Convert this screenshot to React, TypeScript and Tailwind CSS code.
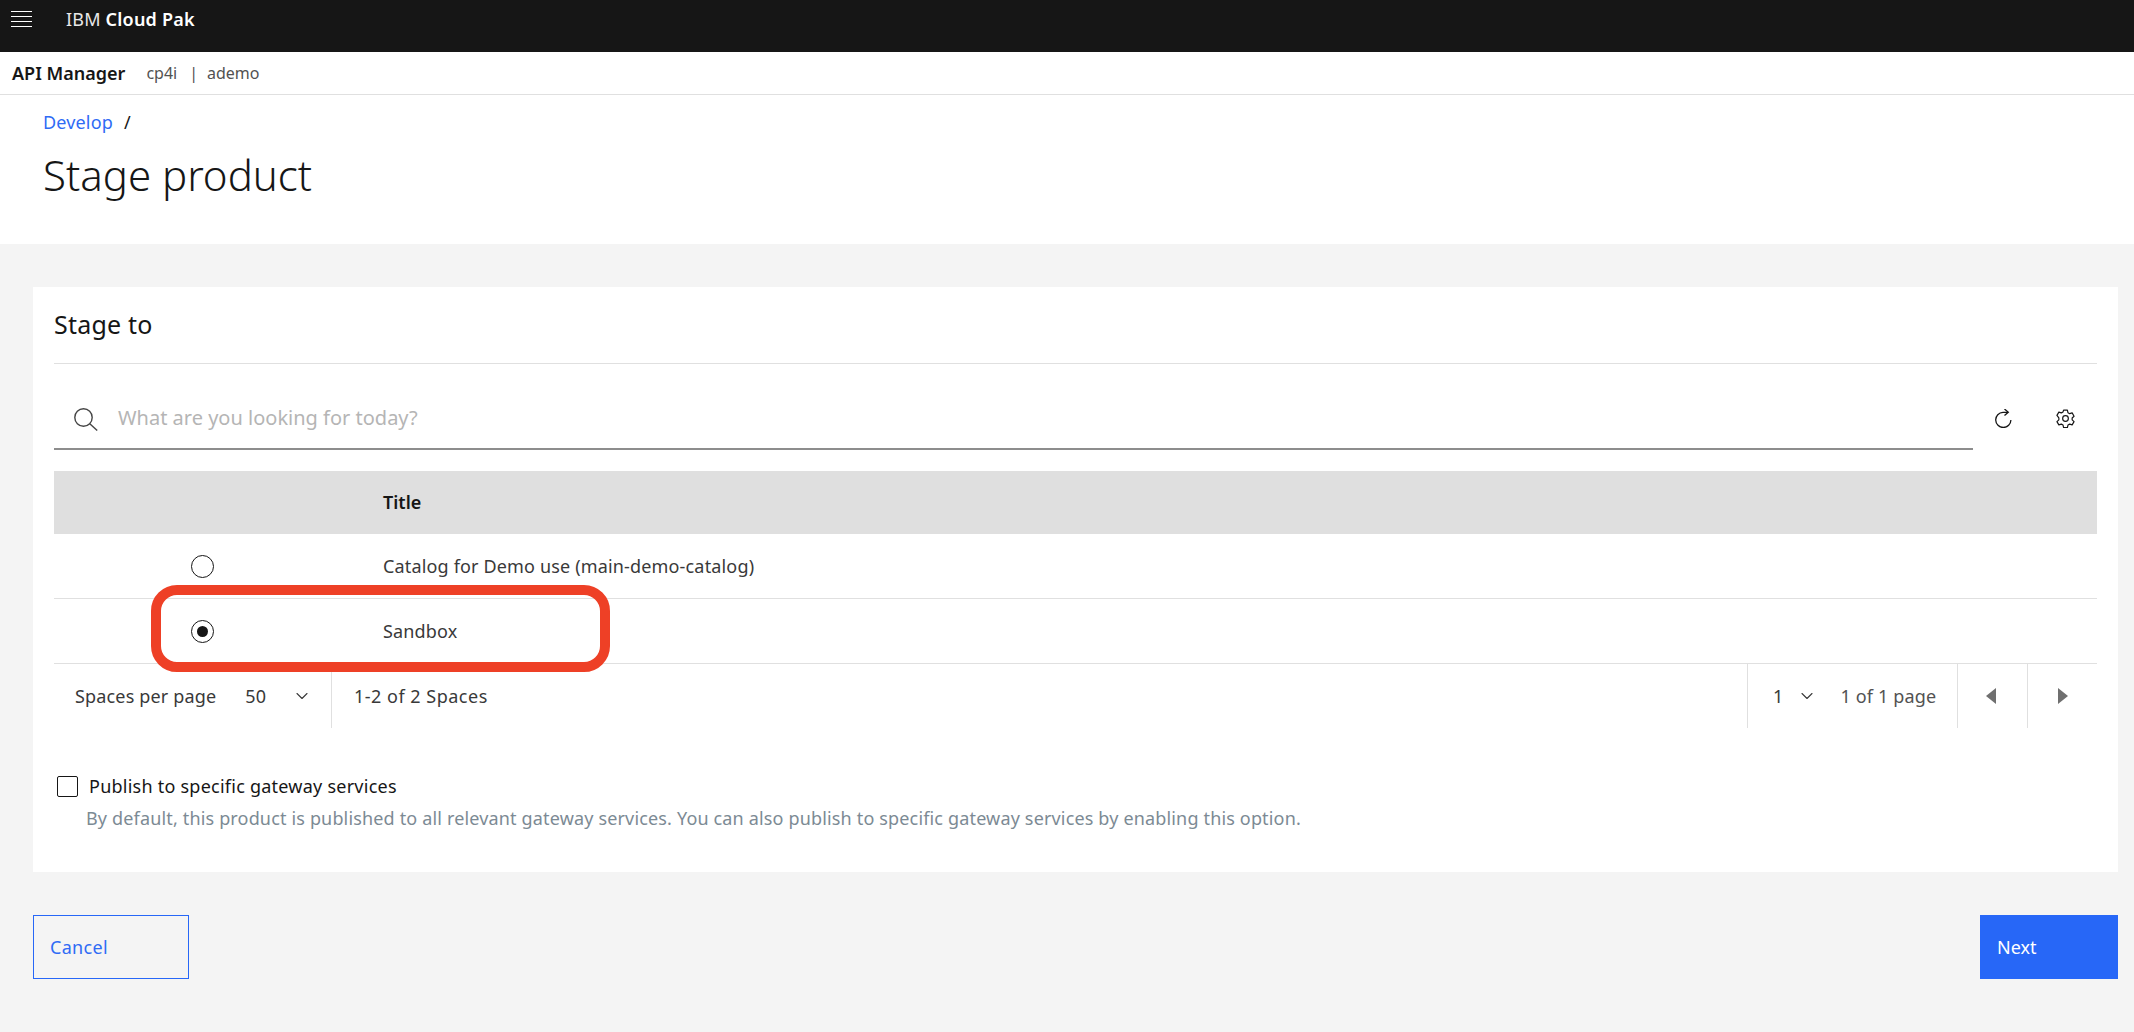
import { ChevronDown } from "lucide-react";

function Radio({ checked }: { checked?: boolean }) {
  return (
    <div className="flex h-[23px] w-[23px] items-center justify-center rounded-full border border-[#161616] bg-white">
      {checked && <div className="h-[11px] w-[11px] rounded-full bg-[#161616]" />}
    </div>
  );
}

function Row({ title, checked }: { title: string; checked?: boolean }) {
  return (
    <div className="flex h-[65px] items-center border-b border-[#e0e0e0] pt-[1px]">
      <div className="flex w-[329px] justify-end pr-[169px]">
        <Radio checked={checked} />
      </div>
      <span className="text-[18px] tracking-[0.16px] text-[#393939]">{title}</span>
    </div>
  );
}

export default function App() {
  return (
    <div className="flex h-[1032px] flex-col overflow-hidden bg-[#f4f4f4] font-['Noto_Sans',sans-serif] text-[#161616]">
      <header className="flex h-[52px] shrink-0 bg-[#161616] pl-[11px] text-white">
        <div className="mt-[11px] flex h-[16px] w-[21px] flex-col justify-between">
          <div className="h-px bg-white" />
          <div className="h-px bg-white" />
          <div className="h-px bg-white" />
          <div className="h-px bg-white" />
        </div>
        <div className="ml-[34px] mt-[8px] text-[18px] leading-[22px] tracking-[0.2px] text-[#e8e8e8]">
          IBM <span className="font-semibold text-white">Cloud Pak</span>
        </div>
      </header>

      <div className="flex h-[43px] shrink-0 items-center border-b border-[#e0e0e0] bg-white pl-[12px]">
        <span className="text-[18px] font-semibold">API Manager</span>
        <span className="ml-[21px] text-[16px] text-[#525252]">cp4i</span>
        <span className="ml-[12px] text-[16px] text-[#525252]">|</span>
        <span className="ml-[9px] text-[16px] text-[#525252]">ademo</span>
      </div>

      <div className="h-[149px] shrink-0 bg-white pl-[43px]">
        <div className="flex h-[53px] items-center text-[18px] leading-none">
          <span className="tracking-[0.16px] text-[#2f6bf5]">Develop</span>
          <span className="ml-[11px]">/</span>
        </div>
        <h1 className="text-[42px] font-light leading-[54px]">Stage product</h1>
      </div>

      <main className="flex flex-1 flex-col pl-[33px] pr-[16px] pt-[43px]">
        <section className="h-[585px] bg-white px-[21px]">
          <div className="flex h-[77px] items-center border-b border-[#e0e0e0] text-[25px] tracking-[0.2px]">Stage to</div>

          <div className="mt-[31px] flex h-[55px] items-center">
            <div className="flex h-[55px] w-[1919px] items-center border-b-2 border-[#8d8d8d] pb-[3px] pl-[20px]">
              <svg className="h-[25px] w-[25px] text-[#454545]" viewBox="0 0 25 25" fill="none" stroke="currentColor" strokeWidth="1.4">
                <circle cx="9.5" cy="9.5" r="8.7" />
                <path d="M15.8 15.8 23.2 22.6" />
              </svg>
              <span className="mb-[5px] ml-[19px] text-[20px] text-[#b5b5b5]">What are you looking for today?</span>
            </div>
            <div className="mb-[8px] ml-[20px] flex w-[20px] justify-center">
              <svg className="h-[19px] w-[17px]" viewBox="0 0 17 19" fill="none" stroke="#161616" strokeWidth="1.3">
                <path d="M13 3.3H8A7.6 7.6 0 1 0 15.9 11" />
                <path d="M9.5 0 13.3 3.3 9.5 6.6" />
              </svg>
            </div>
            <div className="mb-[9px] ml-[40px] flex w-[24px] justify-center">
              <svg className="h-[19px] w-[19px]" viewBox="0 0 24 24" fill="none" stroke="#161616" strokeWidth="1.5" strokeLinejoin="round">
                <circle cx="12" cy="12" r="3.6" />
                <path d="M9.6 1.5h4.8l.7 3.2 2.2 1.2 3.1-1 2.4 4.2-2.4 2.2v2.4l2.4 2.2-2.4 4.2-3.1-1-2.2 1.2-.7 3.1H9.6l-.7-3.1-2.2-1.2-3.1 1-2.4-4.2 2.4-2.2v-2.4L1.2 8.1l2.4-4.2 3.1 1 2.2-1.2z" />
              </svg>
            </div>
          </div>

          <div className="relative mt-[21px]">
            <div className="flex h-[63px] items-center bg-[#dfdfdf] pl-[329px] text-[18px] font-semibold">Title</div>
            <Row title="Catalog for Demo use (main-demo-catalog)" />
            <Row title="Sandbox" checked />
            <div className="absolute left-[97px] top-[114px] h-[87px] w-[459px] rounded-[26px] border-[10px] border-[#ee4026]" />

            <div className="flex h-[64px] text-[18px] tracking-[0.16px] text-[#393939]">
              <div className="flex w-[278px] items-center border-r border-[#e0e0e0] pl-[21px]">
                <span>Spaces per page</span>
                <span className="ml-[29px]">50</span>
                <ChevronDown className="ml-[26px] h-[20px] w-[20px]" strokeWidth={1.3} />
              </div>
              <div className="flex flex-1 items-center pl-[22px] tracking-[0.5px]">1-2 of 2 Spaces</div>
              <div className="flex w-[210px] items-center border-l border-[#e0e0e0] pl-[25px]">
                <span>1</span>
                <ChevronDown className="ml-[14px] h-[20px] w-[20px]" strokeWidth={1.3} />
                <span className="ml-[23px] text-[#525252]">1 of 1 page</span>
              </div>
              <div className="flex w-[70px] items-center justify-center border-l border-[#e0e0e0] pr-[3px]">
                <div className="h-0 w-0 border-y-[8px] border-r-[10px] border-y-transparent border-r-[#6f6f6f]" />
              </div>
              <div className="flex w-[70px] items-center justify-center border-l border-[#e0e0e0]">
                <div className="h-0 w-0 border-y-[8px] border-l-[10px] border-y-transparent border-l-[#6f6f6f]" />
              </div>
            </div>
          </div>

          <div className="mt-[47px] flex items-center pl-[3px]">
            <div className="h-[21px] w-[21px] rounded-[2px] border border-[#161616]" />
            <span className="ml-[11px] text-[18px] leading-[22px] tracking-[0.24px]">Publish to specific gateway services</span>
          </div>
          <p className="ml-[32px] mt-[10px] text-[18px] leading-[22px] tracking-[0.16px] text-[#7c8a94]">
            By default, this product is published to all relevant gateway services. You can also publish to specific gateway services by enabling this option.
          </p>
        </section>

        <div className="mt-[43px] flex justify-between">
          <button className="h-[64px] w-[156px] border border-[#2767f7] pl-[16px] text-left text-[18px] tracking-[0.3px] text-[#2f6bf5]">Cancel</button>
          <button className="h-[64px] w-[138px] bg-[#2767f7] pl-[17px] text-left text-[18px] text-white">Next</button>
        </div>
      </main>
    </div>
  );
}
